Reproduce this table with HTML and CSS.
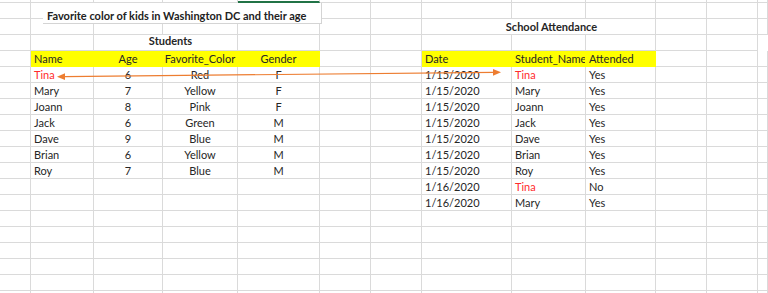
FILE: index.html
```html
<!DOCTYPE html>
<html>
<head>
<meta charset="utf-8">
<link rel="stylesheet" href="styles.css">
</head>
<body>
<div class="sheet">
<table class="grid">
<colgroup>
<col class="w31"><col class="w63"><col class="w69"><col class="w75"><col class="w82"><col class="w51"><col class="w51"><col class="w90"><col class="w74"><col class="w70"><col class="w51"><col class="w51"><col class="w10">
</colgroup>
<tr class="top"><td></td><td></td><td></td><td></td><td class="sel"></td><td></td><td></td><td></td><td></td><td></td><td></td><td></td><td></td></tr>
<tr><td></td><td></td><td></td><td></td><td></td><td></td><td></td><td></td><td></td><td></td><td></td><td></td><td></td></tr>
<tr><td></td><td></td><td></td><td></td><td></td><td></td><td></td><td colspan="3" class="bold sa">School Attendance</td><td></td><td></td><td></td></tr>
<tr><td></td><td></td><td colspan="2" class="bold st">Students</td><td></td><td></td><td></td><td></td><td></td><td></td><td></td><td></td></tr>
<tr><td></td><td class="hdr">Name</td><td class="hdr c">Age</td><td class="hdr c">Favorite_Color</td><td class="hdr c">Gender</td><td></td><td></td><td class="hdr">Date</td><td class="hdr">Student_Name</td><td class="hdr">Attended</td><td></td><td></td><td></td></tr>
<tr><td></td><td class="red">Tina</td><td class="c">6</td><td class="c">Red</td><td class="c">F</td><td></td><td></td><td>1/15/2020</td><td class="red">Tina</td><td>Yes</td><td></td><td></td><td></td></tr>
<tr><td></td><td>Mary</td><td class="c">7</td><td class="c">Yellow</td><td class="c">F</td><td></td><td></td><td>1/15/2020</td><td>Mary</td><td>Yes</td><td></td><td></td><td></td></tr>
<tr><td></td><td>Joann</td><td class="c">8</td><td class="c">Pink</td><td class="c">F</td><td></td><td></td><td>1/15/2020</td><td>Joann</td><td>Yes</td><td></td><td></td><td></td></tr>
<tr><td></td><td>Jack</td><td class="c">6</td><td class="c">Green</td><td class="c">M</td><td></td><td></td><td>1/15/2020</td><td>Jack</td><td>Yes</td><td></td><td></td><td></td></tr>
<tr><td></td><td>Dave</td><td class="c">9</td><td class="c">Blue</td><td class="c">M</td><td></td><td></td><td>1/15/2020</td><td>Dave</td><td>Yes</td><td></td><td></td><td></td></tr>
<tr><td></td><td>Brian</td><td class="c">6</td><td class="c">Yellow</td><td class="c">M</td><td></td><td></td><td>1/15/2020</td><td>Brian</td><td>Yes</td><td></td><td></td><td></td></tr>
<tr><td></td><td>Roy</td><td class="c">7</td><td class="c">Blue</td><td class="c">M</td><td></td><td></td><td>1/15/2020</td><td>Roy</td><td>Yes</td><td></td><td></td><td></td></tr>
<tr><td></td><td></td><td></td><td></td><td></td><td></td><td></td><td>1/16/2020</td><td class="red">Tina</td><td>No</td><td></td><td></td><td></td></tr>
<tr><td></td><td></td><td></td><td></td><td></td><td></td><td></td><td>1/16/2020</td><td>Mary</td><td>Yes</td><td></td><td></td><td></td></tr>
<tr><td></td><td></td><td></td><td></td><td></td><td></td><td></td><td></td><td></td><td></td><td></td><td></td><td></td></tr>
<tr><td></td><td></td><td></td><td></td><td></td><td></td><td></td><td></td><td></td><td></td><td></td><td></td><td></td></tr>
<tr><td></td><td></td><td></td><td></td><td></td><td></td><td></td><td></td><td></td><td></td><td></td><td></td><td></td></tr>
<tr><td></td><td></td><td></td><td></td><td></td><td></td><td></td><td></td><td></td><td></td><td></td><td></td><td></td></tr>
<tr><td></td><td></td><td></td><td></td><td></td><td></td><td></td><td></td><td></td><td></td><td></td><td></td><td></td></tr>
<tr><td></td><td></td><td></td><td></td><td></td><td></td><td></td><td></td><td></td><td></td><td></td><td></td><td></td></tr>
</table>
<div class="titlebox">Favorite color of kids in Washington DC and their age</div>
<svg class="arrow" width="768" height="293" viewBox="0 0 768 293">
<line x1="64" y1="76.6" x2="494" y2="72.4" stroke="#ed7d31" stroke-width="1.2"/>
<polygon points="57,76.7 65,73.2 65,80" fill="#ed7d31"/>
<polygon points="501,72.3 493,68.9 493,75.7" fill="#ed7d31"/>
</svg>
</div>
</body>
</html>
```
FILE: styles.css
```css
body {
  margin: 0;
  background: #fff;
  font-family: Lato, "Open Sans", sans-serif;
  font-size: 11px;
  color: #262626;
}
.sheet {
  position: relative;
  width: 768px;
  height: 293px;
  overflow: hidden;
}
.grid {
  border-collapse: separate;
  border-spacing: 0;
  table-layout: fixed;
  width: 768px;
}
.w31 { width: 31px; }
.w63 { width: 63px; }
.w69 { width: 69px; }
.w75 { width: 75px; }
.w82 { width: 82px; }
.w51 { width: 51px; }
.w90 { width: 90px; }
.w74 { width: 74px; }
.w70 { width: 70px; }
.w10 { width: 10px; }
.grid tr { height: 16px; }
.grid td {
  box-sizing: border-box;
  height: 16px;
  padding: 1px 2px 0 3px;
  border-right: 1px solid #dadada;
  border-bottom: 1px solid #dadada;
  white-space: nowrap;
  overflow: hidden;
  line-height: 14px;
  vertical-align: bottom;
}
.grid tr.top { height: 3px; }
.grid tr.top td { height: 3px; padding: 0; line-height: 0; }
.grid td.sel { border-bottom: 2px solid #217346; }
.grid td.c { text-align: center; padding-left: 1px; padding-right: 1px; }
.bold { font-weight: bold; }
.hdr {
  background: #ffff00;
  border-color: #ffff00 !important;
}
.red { color: #ff2b2b; }
.grid td.st {
  text-align: center;
  padding: 0 2px 3px 12px;
  line-height: 12px;
}
.grid td.sa { text-align: center; padding-left: 28px; }
.titlebox {
  position: absolute;
  left: 43px;
  top: 3px;
  width: 279px;
  height: 21px;
  background: #fff;
  border-right: 1px solid #d4d4d4;
  border-bottom: 1px solid #d4d4d4;
  font-weight: bold;
  line-height: 16px;
  padding: 5px 0 0 4px;
  box-sizing: border-box;
  white-space: nowrap;
  color: #222;
}
.arrow {
  position: absolute;
  left: 0;
  top: 0;
  pointer-events: none;
}
```
